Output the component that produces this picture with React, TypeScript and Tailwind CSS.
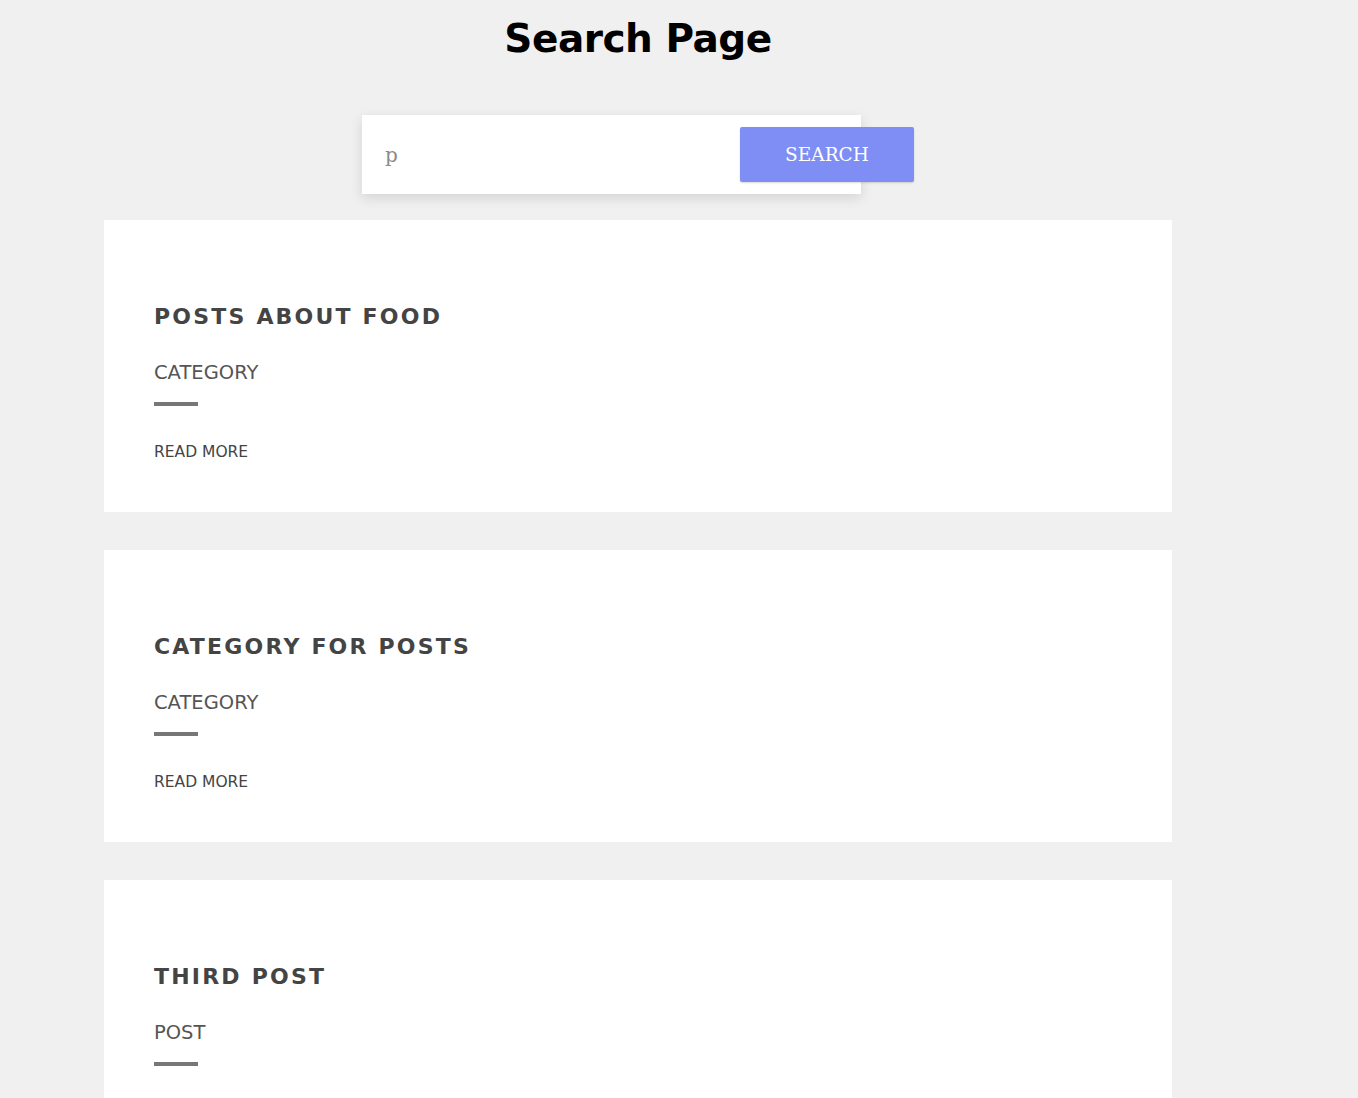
const posts = [
  { title: 'POSTS ABOUT FOOD', type: 'CATEGORY' },
  { title: 'CATEGORY FOR POSTS', type: 'CATEGORY' },
  { title: 'THIRD POST', type: 'POST' },
]

const sans = 'font-["DejaVu_Sans",sans-serif]'

export default function App() {
  return (
    <div className="min-h-screen bg-[#f0f0f0] pb-10">
      <div className="mx-auto ml-[104px] w-[1068px]">
        <h1 className={`${sans} pt-[15px] text-center text-[39px] font-bold leading-[48px] tracking-[-0.5px] text-black`}>
          Search Page
        </h1>

        <form className="mt-[52px] flex items-center justify-center" onSubmit={e => e.preventDefault()}>
          <input
            defaultValue="p"
            className='h-[79px] w-[499px] bg-white px-[23px] font-["DejaVu_Serif",serif] text-[20px] text-[#8a8a8a] shadow-[0_4px_12px_rgba(0,0,0,0.12)] outline-none'
          />
          <button
            type="submit"
            className='-ml-[121px] h-[55px] w-[174px] rounded-[2px] bg-[#7f8ef5] font-["DejaVu_Serif",serif] text-[18.5px] text-white shadow-[0_1px_2px_rgba(0,0,0,0.15)]'
          >
            SEARCH
          </button>
        </form>

        <div className="mt-[26px] flex flex-col gap-[38px]">
          {posts.map(post => (
            <div key={post.title} className="h-[292px] bg-white px-[50px] pt-[83px]">
              <h2 className={`${sans} text-[22px] font-bold leading-[28px] tracking-[2.2px] text-[#444]`}>
                {post.title}
              </h2>
              <p className={`${sans} mt-[30px] text-[19.5px] font-normal leading-[24px] text-[#555]`}>
                {post.type}
              </p>
              <div className="mt-[17px] h-[4px] w-[44px] bg-[#777]" />
              <a href="#" className={`${sans} mt-[37px] block text-[15.5px] leading-[18px] text-[#444]`}>
                READ MORE
              </a>
            </div>
          ))}
        </div>
      </div>
    </div>
  )
}
